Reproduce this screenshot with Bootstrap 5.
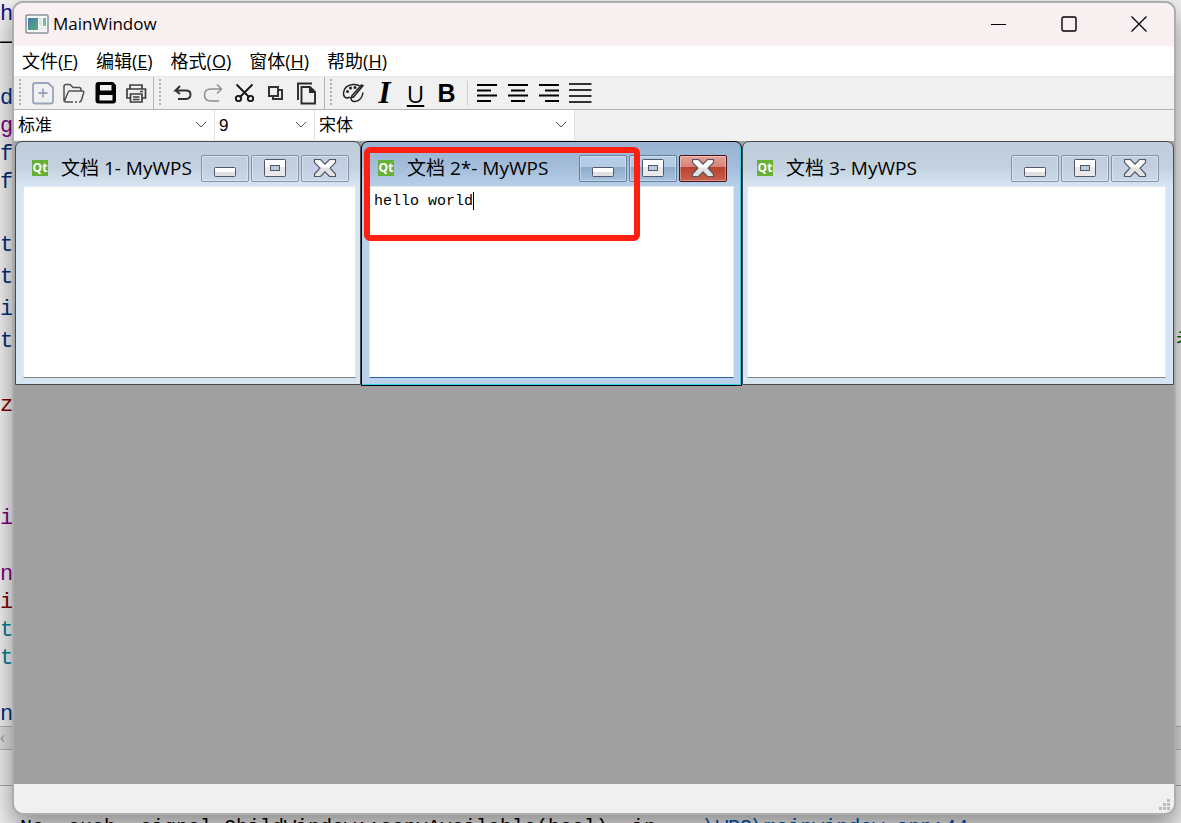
<!DOCTYPE html>
<html lang="zh-CN">
<head>
<meta charset="utf-8">
<meta name="viewport" content="width=device-width, initial-scale=1">
<title>MainWindow</title>
<link href="https://cdn.jsdelivr.net/npm/bootstrap@5.3.0/dist/css/bootstrap.min.css" rel="stylesheet">
<style>
  :root { --ui: "Open Sans", "Noto Sans CJK SC", sans-serif; --code: "Liberation Mono", "Noto Sans CJK SC", monospace; }
  body { font-family: var(--ui); color: #000; background: #f0f0f0; }
  button { color: inherit; background: none; border: 0; padding: 0; }
  svg { display: block; }

  /* editor behind the window */
  .editor-code, .editor-output { font: 22px/28px var(--code); }
  .editor-code { padding-top: 1px; }
  .editor-code > div { height: 28px; flex: none; }
  .editor-code > .tall { height: 32px; line-height: 34px; }
  .editor-code > .gap-block { height: 84px; }
  .kw { color: #10108a; } .ty { color: #800080; } .fn { color: #00307c; }
  .fl { color: #800000; } .cl { color: #008090; }
  .edge-note { width: 5px; color: #007000; overflow: hidden; }
  .editor-scroll { height: 24px; background: #dcdcdc; border: solid #b4b4b4; border-width: 1px 0; color: #999; line-height: 20px; }
  .editor-tabs { height: 36px; border-bottom: 1px solid #a8a8a8; background: #ececec; }
  .editor-output { height: 37px; padding: 30px 0 0 20px; font-size: 20px; line-height: 24px; white-space: pre; }
  .editor-output a { color: #0055b0; text-decoration: none; }

  /* main window */
  .app { inset: 1px 5px 8px 12px; border: 2px solid #adadad; border-radius: 11px; background: #f0f0f0; box-shadow: 0 12px 26px rgba(0,0,0,.42); }
  .title-row { height: 43px; background: #f9f0f1; padding-left: 11px; font-size: 17px; line-height: 24px; padding-bottom: 2px; }
  .title-row button { width: 70px; height: 41px; }
  .menu-row { height: 31px; background: #fff; border-bottom: 1px solid #e8e8e8; padding-left: 8px; gap: 18px; font-size: 18px; line-height: 30px; }
  .menu-row a { color: #000; text-decoration: none; }
  .tool-row { height: 33px; border-bottom: 1px solid #b4b4b4; }
  .tool-row button { width: 31px; height: 32px; overflow: hidden; }
  .tool-group { padding: 0 2px 0 5px; border-right: 1px solid #b4b4b4; }
  .tool-group:last-child { border: 0; }
  .grip { width: 3px; height: 28px; margin-right: 5px; background: radial-gradient(circle at 1px 1px, #b0b0b0 1px, transparent 1px) 0 0/3px 4px; }
  .tool-split { width: 1px; height: 24px; margin: 0 4px 0 5px; background: #cfcfcf; }
  .glyph-i { font: italic bold 31px/32px "Liberation Serif", serif; }
  .glyph-u { font: 24px/29px "Open Sans", sans-serif; }
  .glyph-b { font: bold 25px/32px "Liberation Sans", sans-serif; }
  .combo-row { height: 31px; }
  .combo-row select { appearance: none; height: 30px; border: 0; border-right: 1px solid #e2e2e2; border-radius: 0; padding: 2px 26px 0 4px; color: #000; font: 17px/28px "Liberation Sans", "Noto Sans CJK SC", sans-serif;
    background: #fff url("data:image/svg+xml,%3Csvg xmlns='http://www.w3.org/2000/svg' width='12' height='8'%3E%3Cpath d='M1 1l5 5 5-5' fill='none' stroke='%23555'/%3E%3C/svg%3E") no-repeat right 7px center; }
  .w-style { width: 201px; } .w-size { width: 100px; } .w-font { width: 260px; }

  /* document area */
  .mdi { background: #a0a0a0; padding-left: 1px; }
  .status-row { height: 29px; padding: 0 3px 2px; }
  .docwin { height: 244px; border: 1px solid #4a4a4a; border-radius: 7px 7px 0 0; padding: 0 7px; background: linear-gradient(#c0cddc, #c3d1df 24px, #d7e4f2 44px); }
  .doc-a { flex: 346 1 346px; padding-right: 4px; }
  .doc-b { flex: 381 1 381px; height: 245px; border-color: #000; background: linear-gradient(#98b4d2, #a3bcd9 24px, #b9d1ea 46px); box-shadow: inset -1px -1px #35d0ec; }
  .doc-c { flex: 432 1 432px; padding-left: 4px; }
  .doc-title { height: 44px; font-size: 19px; padding-left: 8px; padding-top: 9px; white-space: nowrap; }
  .doc-c .doc-title { padding-left: 9px; }
  .doc-title > span { margin-left: 12px; line-height: 34px; }
  .doc-buttons { gap: 2px; margin: 4px 7px 0 0; }
  .doc-buttons button { width: 48px; height: 27px; border: 1px solid #8494ae; border-radius: 2px; box-shadow: inset 0 0 0 1px rgba(255,255,255,.35); background: rgba(190,206,224,.4); }
  .doc-b .doc-buttons button { border-color: #64809f; background: linear-gradient(#b4cce5 45%, #8eaccb 46%, #a8c2de); }
  .doc-b .doc-buttons .shut { border-color: #4c1019; background: linear-gradient(#e5a196, #d88478 42%, #b9402e 44%, #c9614c); }
  .doc-page { border: 1px solid #e3e8ee; border-bottom-color: #858585; background: #fff; height: 192px; }
  .doc-b .doc-page { border-bottom-color: #2868a8; }
  .doc-page textarea { font: 15px/20px var(--code); color: #000; resize: none; border: 0; outline: 0; padding: 5px 4px; background: #fff; }
  .caret { left: calc(4px + 11ch); top: 5px; width: 1px; height: 18px; font: 15px/20px var(--code); background: #000; }
  .marker { left: 2px; top: 5px; width: 276px; height: 94px; border: 6px solid #ff1f12; border-radius: 6px; pointer-events: none; }
</style>
</head>
<body class="vh-100 overflow-hidden position-relative">

<svg class="d-none" aria-hidden="true">
  <symbol id="qt" viewBox="0 0 18 18"><path d="M1 1h16v16H1z" fill="#66b036"/><text x="9" y="13" text-anchor="middle" font-family="Open Sans, sans-serif" font-size="12" font-weight="700" fill="#fff">Qt</text></symbol>
  <symbol id="w-min" viewBox="0 0 46 25"><rect x="12.500" y="11.500" width="21" height="9" rx="1" fill="#e0e0e2" stroke="#535666"/><path d="M13 12h20v4H13z" fill="#fff"/></symbol>
  <symbol id="w-max" viewBox="0 0 46 25"><rect x="12.500" y="3.500" width="21" height="17" rx="1" fill="#e9e9ea" stroke="#535666"/><path d="M13 4h20v7H13z" fill="#fff"/><rect x="18.500" y="9.500" width="9" height="5" fill="#b5cbe2" stroke="#535666"/></symbol>
  <symbol id="w-shut" viewBox="0 0 46 25"><path d="M12.500 3.500h6L23 8.200l4.500-4.700h6v3L28 12l5.500 6v2.500h-6L23 15.800l-4.500 4.700h-6V18l5.500-6-5.500-5.500z" fill="#e2e2e2" stroke="#535666" stroke-width="1.200"/><path d="M13.500 4.500h4.600L23 9.500l4.900-5h4.600v2l-5 5h-9l-5-5z" fill="#fff"/></symbol>
</svg>

<div class="editor d-flex flex-column h-100" aria-hidden="true">
  <div class="editor-code flex-grow-1 d-flex flex-column overflow-hidden">
    <div class="kw">h</div><div>—</div><div></div>
    <div class="fn">d</div><div class="ty">g</div><div class="fn">f</div><div class="fn">f</div>
    <div class="tall"></div>
    <div class="tall fn">t</div><div class="tall fn">t</div><div class="tall fn">i</div>
    <div class="tall fn d-flex">t<span class="edge-note ms-auto">者</span></div>
    <div class="tall"></div><div class="tall fl">z</div>
    <div class="gap-block"></div>
    <div class="ty">i</div><div></div><div class="ty">n</div><div class="fl">i</div>
    <div class="cl">t</div><div class="cl">t</div><div></div><div class="fn">n</div>
  </div>
  <div class="editor-scroll">‹</div>
  <div class="editor-tabs"></div>
  <div class="editor-output overflow-hidden">No  such  signal ChildWindow::copyAvailable(bool)  in  <a href="#" tabindex="-1">..\WPS\mainwindow.cpp:44</a></div>
</div>

<main class="app position-absolute d-flex flex-column overflow-hidden">
  <header class="title-row d-flex align-items-center flex-shrink-0">
    <svg width="24" height="20" viewBox="0 0 24 20" aria-hidden="true"><defs><linearGradient id="pane" x2="1" y2="1"><stop stop-color="#4478b0"/><stop offset="1" stop-color="#58b070"/></linearGradient></defs><rect x="1" y="1" width="22" height="18" rx="1" fill="#f6f8fa" stroke="#8a929c" stroke-width="1.500"/><path d="M3 4h10v12H3z" fill="url(#pane)"/><path d="M14 4h3v8h-3z" fill="#dfe9e4"/><path d="M18 4h3v8h-3z" fill="#7dbb96"/><path d="M14 13h7v3h-7z" fill="#e8ecef"/></svg>
    <span class="ms-1">MainWindow</span>
    <div class="ms-auto d-flex">
      <button aria-label="最小化"><svg class="m-auto" width="16" height="16"><path d="M0 8.500h15" stroke="#000"/></svg></button>
      <button aria-label="最大化"><svg class="m-auto" width="16" height="16"><rect x="1" y="1" width="14" height="14" rx="1.500" fill="none" stroke="#000" stroke-width="1.400"/></svg></button>
      <button aria-label="关闭"><svg class="m-auto" width="16" height="16"><path d="M.5.5l15 15m0-15l-15 15" stroke="#000" stroke-width="1.300"/></svg></button>
    </div>
  </header>

  <nav class="menu-row d-flex flex-shrink-0">
    <a href="#">文件(<u>F</u>)</a><a href="#">编辑(<u>E</u>)</a><a href="#">格式(<u>O</u>)</a><a href="#">窗体(<u>H</u>)</a><a href="#">帮助(<u>H</u>)</a>
  </nav>

  <div class="tool-row d-flex flex-shrink-0" role="toolbar">
    <div class="tool-group d-flex align-items-center">
      <i class="grip"></i>
      <button aria-label="新建"><svg width="31" height="32" fill="none" stroke="#9aa4bd" stroke-width="1.800"><path d="M8.500 6H21l5 4.500V24q0 2.500-2.500 2.500h-15Q6 26.500 6 24V8.500Q6 6 8.500 6zM16 11.500v9M11.500 16h9"/></svg></button>
      <button aria-label="打开"><svg width="31" height="32" fill="none" stroke="#505050" stroke-width="1.500"><path d="M15 25H8q-2 0-2-2V9.500q0-2 2-2h4l3 3h6q2 0 2 2V14M6.500 24l3.500-8.500q.5-1.500 2-1.500h12.500q1.700 0 1.200 1.600L23.500 23q-.5 2-2.500 2M17 25h2"/></svg></button>
      <button aria-label="保存"><svg width="31" height="32"><path fill="#000" fill-rule="evenodd" d="M9.500 5h14.500l3 3v15.500q0 3-3 3H9.500q-3 0-3-3V8q0-3 3-3zM11 8v5.500h11.500V8zM10.500 18v5.500h13V18z"/></svg></button>
      <button aria-label="打印"><svg width="31" height="32" fill="none" stroke="#3c3c3c" stroke-width="1.700"><path d="M10 12V8h12v4M10 21H7v-9h18.500v9H22M10.500 17H22v8H10.500zM13 20h6.500M13 22.500h6.500M20 14.500h3"/></svg></button>
    </div>
    <div class="tool-group d-flex align-items-center">
      <i class="grip"></i>
      <button aria-label="撤销"><svg width="31" height="32" fill="none" stroke="#333" stroke-width="2"><path d="M13 9l-4.500 4.500H19q4.500 0 4.500 4T19 22h-8M8.500 13.500L13 17"/></svg></button>
      <button aria-label="重做"><svg width="31" height="32" fill="none" stroke="#8f8f8f" stroke-width="1.500"><path d="M19 7.500l4.500 4.500-4.500 4.500M23 12H13q-6.500 0-6.500 6t6.500 6h8"/></svg></button>
      <button aria-label="剪切"><svg width="31" height="32" fill="none" stroke="#111" stroke-width="1.800"><path d="M7.500 7.500l13 13M23.500 7.500l-13 13"/><circle cx="9.500" cy="21.500" r="2.700"/><circle cx="21.500" cy="21.500" r="2.700"/></svg></button>
      <button aria-label="复制"><svg width="31" height="32" fill="none" stroke="#333" stroke-width="2"><path d="M9 10h9v9H9zM18 13h4v9h-9v-3"/></svg></button>
      <button aria-label="粘贴"><svg width="31" height="32" fill="none" stroke="#2a2a2a" stroke-width="1.900"><path d="M7 23V6.500h14M10.500 10H19l5 5v11.500H10.500z"/><path d="M18 9l7 7h-7z" fill="#2a2a2a" stroke="none"/></svg></button>
    </div>
    <div class="tool-group d-flex align-items-center">
      <i class="grip"></i>
      <button aria-label="颜色"><svg width="31" height="32" fill="none" stroke="#222" stroke-width="1.500"><path d="M22.500 9.500Q19.500 7 15 7.500 6 8.500 5.500 16q0 5 4 5 2.500-1.500 3.500.5.500 3.500 4 3 7-1 8-9M25.500 8L15.500 20l-2 .5.500-2L24 7.500"/><g fill="#222" stroke="none"><circle cx="9.500" cy="14.500" r="1.500"/><circle cx="12.500" cy="11" r="1.500"/><circle cx="17" cy="10.500" r="1.500"/></g></svg></button>
      <button class="glyph-i" aria-label="斜体">I</button>
      <button class="glyph-u" aria-label="下划线"><u>U</u></button>
      <button class="glyph-b" aria-label="粗体">B</button>
      <i class="tool-split"></i>
      <button aria-label="左对齐"><svg width="31" height="32"><path d="M5 8h20M5 13.500h14M5 18.500h20M5 24h14" stroke="#000" stroke-width="2"/></svg></button>
      <button aria-label="居中"><svg width="31" height="32"><path d="M5 8h20M8 13.500h14M5 18.500h20M8 24h14" stroke="#000" stroke-width="2"/></svg></button>
      <button aria-label="右对齐"><svg width="31" height="32"><path d="M5 8h20M11 13.500h14M5 18.500h20M11 24h14" stroke="#000" stroke-width="2"/></svg></button>
      <button aria-label="两端对齐"><svg width="31" height="32"><path d="M4 7h22.500M4 13h22.500M4 19h22.500M4 25h22.500" stroke="#333" stroke-width="2"/></svg></button>
    </div>
  </div>

  <div class="combo-row d-flex flex-shrink-0">
    <select class="w-style" aria-label="样式"><option>标准</option></select>
    <select class="w-size" aria-label="字号"><option>9</option></select>
    <select class="w-font" aria-label="字体"><option>宋体</option></select>
  </div>

  <div class="mdi flex-grow-1 d-flex align-items-start">
    <section class="docwin doc-a">
      <div class="doc-title d-flex align-items-start">
        <svg class="mt-2" width="18" height="18"><use href="#qt"/></svg><span>文档 1- MyWPS</span>
        <div class="doc-buttons d-flex ms-auto">
          <button aria-label="最小化"><svg width="46" height="25"><use href="#w-min"/></svg></button>
          <button aria-label="最大化"><svg width="46" height="25"><use href="#w-max"/></svg></button>
          <button aria-label="关闭"><svg width="46" height="25"><use href="#w-shut"/></svg></button>
        </div>
      </div>
      <div class="doc-page"><textarea class="w-100 h-100" aria-label="文档 1"></textarea></div>
    </section>
    <section class="docwin doc-b position-relative">
      <div class="doc-title d-flex align-items-start">
        <svg class="mt-2" width="18" height="18"><use href="#qt"/></svg><span>文档 2*- MyWPS</span>
        <div class="doc-buttons d-flex ms-auto">
          <button aria-label="最小化"><svg width="46" height="25"><use href="#w-min"/></svg></button>
          <button aria-label="最大化"><svg width="46" height="25"><use href="#w-max"/></svg></button>
          <button class="shut" aria-label="关闭"><svg width="46" height="25"><use href="#w-shut"/></svg></button>
        </div>
      </div>
      <div class="doc-page position-relative"><textarea class="w-100 h-100" aria-label="文档 2">hello world</textarea><i class="caret position-absolute"></i></div>
      <div class="marker position-absolute"></div>
    </section>
    <section class="docwin doc-c">
      <div class="doc-title d-flex align-items-start">
        <svg class="mt-2" width="18" height="18"><use href="#qt"/></svg><span>文档 3- MyWPS</span>
        <div class="doc-buttons d-flex ms-auto">
          <button aria-label="最小化"><svg width="46" height="25"><use href="#w-min"/></svg></button>
          <button aria-label="最大化"><svg width="46" height="25"><use href="#w-max"/></svg></button>
          <button aria-label="关闭"><svg width="46" height="25"><use href="#w-shut"/></svg></button>
        </div>
      </div>
      <div class="doc-page"><textarea class="w-100 h-100" aria-label="文档 3"></textarea></div>
    </section>
  </div>

  <footer class="status-row d-flex justify-content-end align-items-end flex-shrink-0">
    <svg width="12" height="12" fill="#bdbdbd" aria-hidden="true"><path d="M8 0h3v3H8zM4 4h3v3H4zM8 4h3v3H8zM0 8h3v3H0zM4 8h3v3H4zM8 8h3v3H8z"/></svg>
  </footer>
</main>

<script src="https://cdn.jsdelivr.net/npm/bootstrap@5.3.0/dist/js/bootstrap.bundle.min.js"></script>
</body>
</html>
